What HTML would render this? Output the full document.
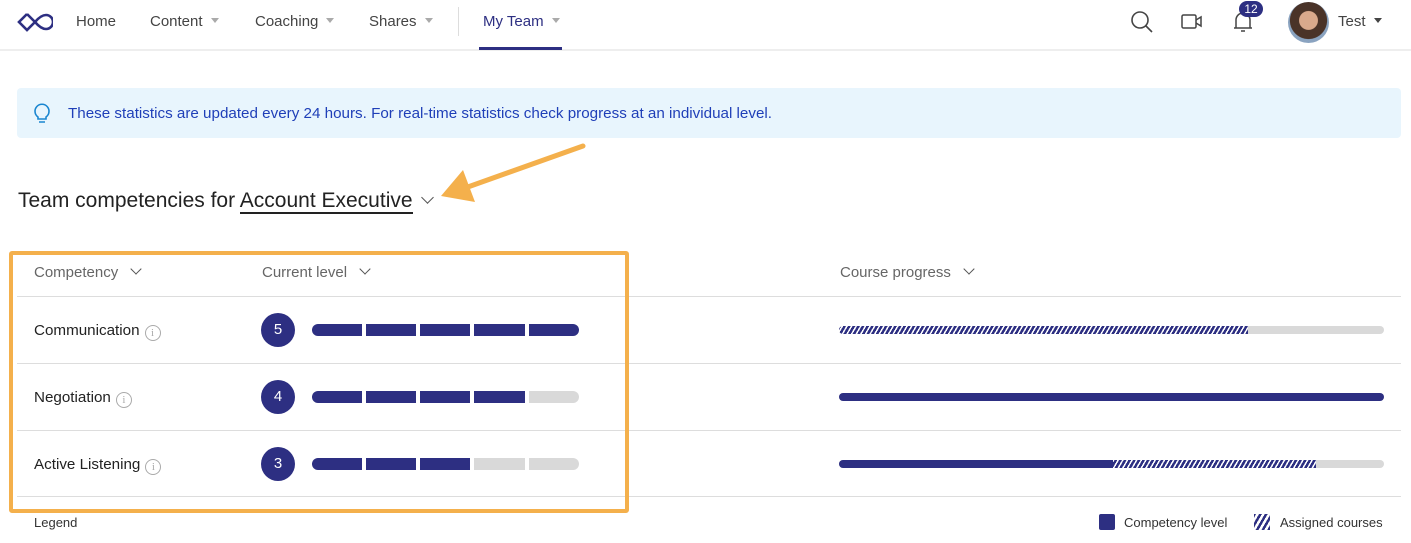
<!DOCTYPE html>
<html><head><meta charset="utf-8"><style>
*{box-sizing:border-box;margin:0;padding:0}
body{width:1411px;height:543px;background:#fff;font-family:"Liberation Sans",sans-serif;position:relative;overflow:hidden;color:#222}
.a{position:absolute}
.nav{font-size:15px;color:#444;top:13px}
.caret{display:inline-block;width:0;height:0;border-left:4px solid transparent;border-right:4px solid transparent;border-top:5px solid #aaa;margin-left:8px;vertical-align:3px}
.line{position:absolute;left:17px;width:1384px;height:1px;background:#ddd}
.seg{position:absolute;height:12px;background:#2d2f82}
.seg.g{background:#d9d9d9}
.circ{position:absolute;width:34px;height:34px;border-radius:50%;background:#2d2f82;color:#fff;font-size:15px;text-align:center;line-height:34px}
.name{position:absolute;left:34px;font-size:15.2px;color:#222}
.info{display:inline-block;width:16px;height:16px;border:1px solid #aaa;border-radius:50%;font-size:11px;color:#aaa;text-align:center;line-height:14px;margin-left:5px;vertical-align:-1px;font-family:"Liberation Serif",serif}
.bar{position:absolute;left:839px;width:545px;height:8px;border-radius:4px;background:#d9d9d9;overflow:hidden}
.hatch{background:repeating-linear-gradient(-60deg,#2d2f82 0 2.5px,#fff 2.5px 4px)}
.hd{position:absolute;top:264px;font-size:15px;color:#666}
.chev{display:inline-block;width:8px;height:8px;border-right:1.5px solid #555;border-bottom:1.5px solid #555;transform:rotate(45deg);margin-left:14px;vertical-align:4px}
</style></head><body>
<div class="a" style="left:0;top:49px;width:1411px;height:2px;background:#eee"></div>
<svg class="a" style="left:17px;top:12px" width="36" height="20" viewBox="0 0 36 20"><path d="M10 2 L2 10 L10 18 L18 10 Q24 3 29 3 A7 7 0 0 1 29 17 Q24 17 18 10 L10 2" fill="none" stroke="#2d2f82" stroke-width="2.6"/></svg>
<div class="a nav" style="left:76px">Home</div>
<div class="a nav" style="left:150px">Content<span class="caret"></span></div>
<div class="a nav" style="left:255px">Coaching<span class="caret"></span></div>
<div class="a nav" style="left:369px">Shares<span class="caret"></span></div>
<div class="a" style="left:458px;top:7px;width:1px;height:29px;background:#ddd"></div>
<div class="a nav" style="left:483px;color:#2d2f82">My Team<span class="caret"></span></div>
<div class="a" style="left:479px;top:47px;width:83px;height:3px;background:#2d2f82"></div>
<svg class="a" style="left:1130px;top:10px" width="24" height="24"><circle cx="10" cy="10" r="8" fill="none" stroke="#444" stroke-width="1.6"/><line x1="16" y1="16" x2="22" y2="22" stroke="#444" stroke-width="1.6"/></svg>
<svg class="a" style="left:1180px;top:12px" width="24" height="20"><rect x="2" y="3" width="14" height="13" rx="1.5" fill="none" stroke="#444" stroke-width="1.5"/><path d="M16 8 L21 5 V14 L16 11" fill="none" stroke="#444" stroke-width="1.5"/></svg>
<svg class="a" style="left:1232px;top:10px" width="22" height="24"><path d="M4 18 V10 A7 7 0 0 1 18 10 V18 Z M2 18 H20 M9 21 H13" fill="none" stroke="#444" stroke-width="1.5"/></svg>
<div class="a" style="left:1239px;top:1px;width:24px;height:16px;border-radius:8px;background:#2d2f82;color:#fff;font-size:12px;text-align:center;line-height:16px">12</div>
<div class="a" style="left:1288px;top:2px;width:41px;height:41px;border-radius:50%;background:radial-gradient(circle at 50% 45%,#d9a98c 0 30%,#4a3328 32% 60%,#8aa3c0 62%)"></div>
<div class="a nav" style="left:1338px">Test<span class="caret" style="border-top-color:#444"></span></div>
<div class="a" style="left:17px;top:88px;width:1384px;height:50px;background:#e8f5fd;border-radius:4px"></div>
<svg class="a" style="left:33px;top:103px" width="18" height="22"><path d="M5 14 A7 7 0 1 1 13 14 V16 H5 Z M6 19 H12" fill="none" stroke="#1a86d0" stroke-width="1.6"/></svg>
<div class="a" style="left:68px;top:105px;font-size:15.2px;color:#1f3fb8">These statistics are updated every 24 hours. For real-time statistics check progress at an individual level.</div>
<svg class="a" style="left:435px;top:140px" width="155" height="70"><path d="M148 6 L30 48" stroke="#f4b04c" stroke-width="5" stroke-linecap="round"/><path d="M6 56 L28 30 L40 62 Z" fill="#f4b04c"/></svg>
<div class="a" style="left:18px;top:189px;font-size:21px;color:#222">Team competencies for <span style="border-bottom:2px solid #222">Account Executive</span><span class="chev" style="margin-left:10px;width:9px;height:9px;vertical-align:5px"></span></div>
<div class="hd" style="left:34px">Competency<span class="chev"></span></div>
<div class="hd" style="left:262px">Current level<span class="chev"></span></div>
<div class="hd" style="left:840px">Course progress<span class="chev"></span></div>
<div class="line" style="top:296px"></div><div class="line" style="top:363px"></div><div class="line" style="top:430px"></div><div class="line" style="top:496px"></div>
<div class="name" style="top:322px">Communication<span class="info">i</span></div>
<div class="name" style="top:389px">Negotiation<span class="info">i</span></div>
<div class="name" style="top:456px">Active Listening<span class="info">i</span></div>
<div class="circ" style="left:261px;top:313px">5</div>
<div class="circ" style="left:261px;top:380px">4</div>
<div class="circ" style="left:261px;top:447px">3</div>
<div class="seg" style="left:312px;top:324px;width:50px;border-radius:6px 0 0 6px"></div><div class="seg" style="left:366px;top:324px;width:50px"></div><div class="seg" style="left:420px;top:324px;width:50px"></div><div class="seg" style="left:474px;top:324px;width:51px"></div><div class="seg" style="left:529px;top:324px;width:50px;border-radius:0 6px 6px 0"></div>
<div class="seg" style="left:312px;top:391px;width:50px;border-radius:6px 0 0 6px"></div><div class="seg" style="left:366px;top:391px;width:50px"></div><div class="seg" style="left:420px;top:391px;width:50px"></div><div class="seg" style="left:474px;top:391px;width:51px"></div><div class="seg g" style="left:529px;top:391px;width:50px;border-radius:0 6px 6px 0"></div>
<div class="seg" style="left:312px;top:458px;width:50px;border-radius:6px 0 0 6px"></div><div class="seg" style="left:366px;top:458px;width:50px"></div><div class="seg" style="left:420px;top:458px;width:50px"></div><div class="seg g" style="left:474px;top:458px;width:51px"></div><div class="seg g" style="left:529px;top:458px;width:50px;border-radius:0 6px 6px 0"></div>
<div class="bar" style="top:326px"><div class="hatch" style="width:409px;height:8px"></div></div>
<div class="bar" style="top:393px;background:#2d2f82"></div>
<div class="bar" style="top:460px"><div style="position:absolute;left:0;width:274px;height:8px;background:#2d2f82"></div><div class="hatch" style="position:absolute;left:274px;width:203px;height:8px"></div></div>
<div class="a" style="left:34px;top:515px;font-size:13px;color:#333">Legend</div>
<div class="a" style="left:1099px;top:514px;width:16px;height:16px;border-radius:2px;background:#2d2f82"></div>
<div class="a" style="left:1124px;top:515px;font-size:13px;color:#333">Competency level</div>
<div class="a" style="left:1254px;top:514px;width:16px;height:16px;background:repeating-linear-gradient(-60deg,#2d2f82 0 2.5px,#fff 2.5px 5px)"></div>
<div class="a" style="left:1280px;top:515px;font-size:13px;color:#333">Assigned courses</div>
<div class="a" style="left:9px;top:251px;width:620px;height:262px;border:4px solid #f4b04c;border-radius:3px"></div>
</body></html>
